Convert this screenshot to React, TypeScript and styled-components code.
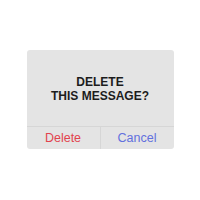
import styled, { createGlobalStyle } from "styled-components"

const Global = createGlobalStyle`
    html, body {
        margin    : 0;
        padding   : 0;
        background: #fff;
    }
`

const Page = styled.div`
    width          : 200px;
    height         : 200px;
    display        : flex;
    align-items    : center;
    justify-content: center;
    font-family    : "Liberation Sans", Arial, sans-serif;
`

const Dialog = styled.div`
    width           : 147px;
    height          : 99px;
    margin-top      : -1px;
    display         : flex;
    flex-direction  : column;
    background-color: #e4e4e4;
    border-radius   : 3px;
    overflow        : hidden;
`

const Message = styled.div`
    flex           : 1;
    display        : flex;
    align-items    : center;
    justify-content: center;
    padding-top    : 2px;
    text-align     : center;
    font-size      : 12px;
    font-weight    : bold;
    line-height    : 14.5px;
    color          : #1c1c1c;
`

const Actions = styled.div`
    height    : 22px;
    display   : grid;
    grid-template-columns: 73px 1fr;
    border-top: 1px solid #d6d6d6;
`

const Action = styled.button<{ $tone: string }>`
    display    : flex;
    align-items: center;
    justify-content: center;
    padding    : 0;
    border     : none;
    background : transparent;
    font-family: inherit;
    font-size  : 12.5px;
    color      : ${p => p.$tone};

    & + & {
        border-left: 1px solid #d6d6d6;
    }
`

export default function App() {
    return (
        <>
            <Global />
            <Page>
                <Dialog>
                    <Message>
                        DELETE<br />THIS MESSAGE?
                    </Message>
                    <Actions>
                        <Action $tone='#e2434e'>Delete</Action>
                        <Action $tone='#6271de'>Cancel</Action>
                    </Actions>
                </Dialog>
            </Page>
        </>
    )
}
